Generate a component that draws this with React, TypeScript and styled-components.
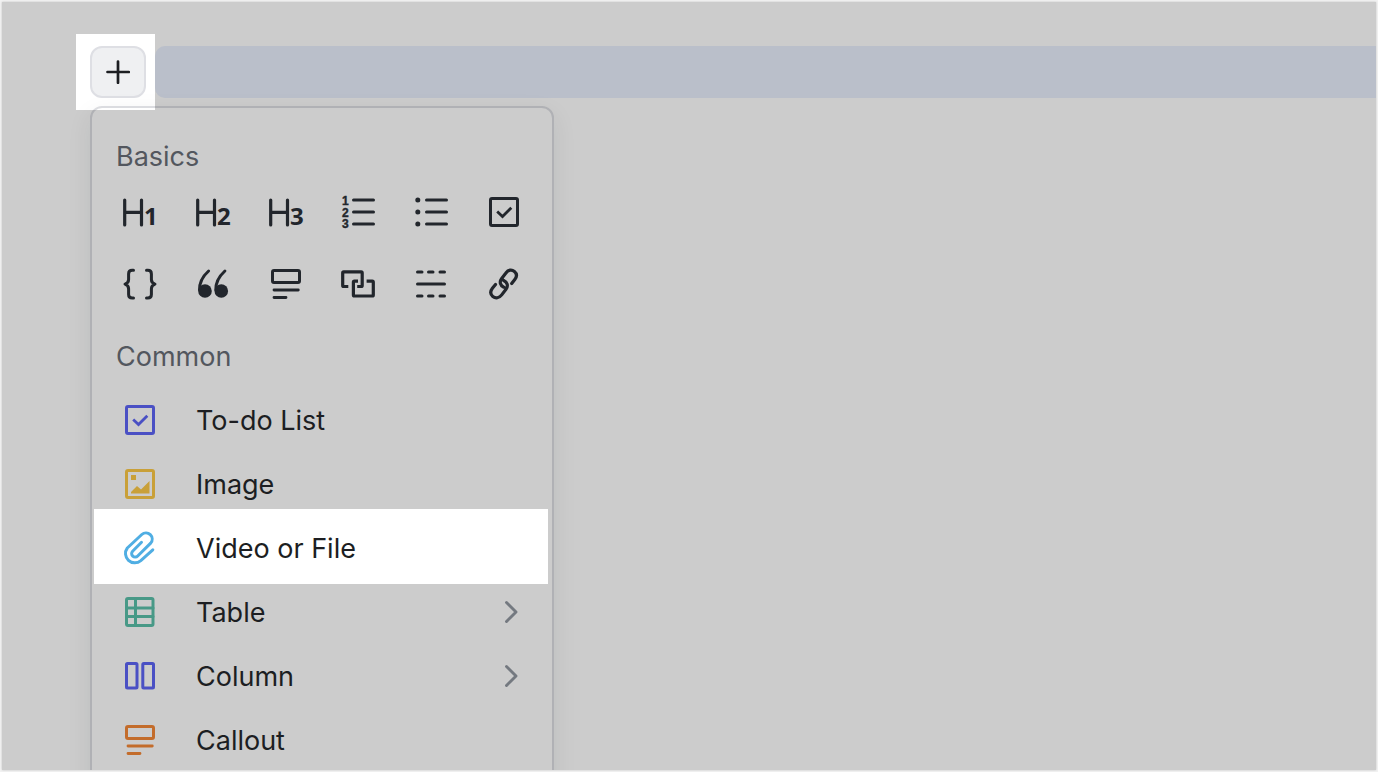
import React from "react";
import styled, { createGlobalStyle } from "styled-components";

const GlobalStyle = createGlobalStyle`
  * { box-sizing: border-box; }
  body { margin: 0; background: #f2f2f2; }
  button { font: inherit; color: inherit; border: 0; background: none; padding: 0; cursor: pointer; }
`;

const Page = styled.div`
  height: 100vh;
  padding: 2px;
  font-family: Inter, "Liberation Sans", sans-serif;
  color: #1c1e22;
`;

const Canvas = styled.main`
  height: 100%;
  overflow: hidden;
  padding: 32px 0 0 74px;
  background: #cccccc;
  box-shadow: 0 0 2px rgba(0, 0, 0, 0.2);
`;

const EditorLine = styled.div`
  display: flex;
  align-items: center;
`;

const Spotlight = styled.div`
  flex: none;
  padding: 12px 9px 12px 14px;
  background: #ffffff;
`;

const AddButton = styled.button`
  display: flex;
  align-items: center;
  justify-content: center;
  width: 56px;
  height: 52px;
  border: 2px solid #dedfe4;
  border-radius: 12px;
  background: #eff0f2;
`;

const SelectedBlock = styled.div`
  flex: 1;
  height: 52px;
  border-radius: 10px 0 0 10px;
  background: #babfca;
`;

const Menu = styled.div`
  position: relative;
  z-index: 0;
  width: 464px;
  margin: -4px 0 0 14px;
  padding: 32px 0;
  border: 2px solid rgba(31, 35, 60, 0.16);
  border-radius: 12px;
  box-shadow: 0 8px 24px rgba(31, 35, 41, 0.08);
`;

const GroupTitle = styled.h2`
  margin: 0 24px 14px;
  font-size: 27px;
  font-weight: 400;
  line-height: 34px;
  color: #53575e;
`;

const BasicGrid = styled.div`
  display: grid;
  grid-template-columns: repeat(6, 48px);
  grid-auto-rows: 48px;
  row-gap: 24px;
  justify-content: space-between;
  margin: 0 24px 32px;
  color: #22262c;
`;

const BasicButton = styled.button`
  display: flex;
  align-items: center;
  justify-content: center;
`;

const Item = styled.button<{ $lit?: boolean }>`
  position: relative;
  display: flex;
  align-items: center;
  gap: 32px;
  width: 100%;
  height: 64px;
  padding: 0 29px 0 24px;
  font-size: 27px;
  line-height: 32px;
  text-align: left;

  &::before {
    content: "";
    display: ${(p) => (p.$lit ? "block" : "none")};
    position: absolute;
    z-index: -1;
    inset: -7px 4px -4px 2px;
    background: #ffffff;
  }
`;

const ItemIcon = styled.span<{ $color: string }>`
  display: flex;
  justify-content: center;
  width: 48px;
  color: ${(p) => p.$color};
`;

const ItemLabel = styled.span`
  flex: 1;
  padding-top: 2px;
`;

const Glyph = styled.svg`
  display: block;
  flex: none;
  fill: none;
  stroke: currentColor;
  stroke-width: 3;
  stroke-linecap: round;
  stroke-linejoin: round;
`;

const LevelDigit = styled.text`
  font-family: "Open Sans", "Noto Sans", sans-serif;
  font-size: 24px;
  font-weight: 700;
  fill: currentColor;
  stroke: none;
`;

const ListDigit = styled.text`
  font-family: "Liberation Sans", sans-serif;
  font-size: 12px;
  font-weight: 700;
  fill: currentColor;
  stroke: currentColor;
  stroke-width: 0.4;
`;

const Icon = ({ children }: { children: React.ReactNode }) => (
  <Glyph width="40" height="40" viewBox="0 0 40 40" aria-hidden="true">
    {children}
  </Glyph>
);

const Heading = ({ level }: { level: number }) => (
  <Icon>
    <path d="M4.700 8v25M21.500 8v25M5 20.300h16.500" strokeWidth="3.200" />
    <LevelDigit x="24" y="33">{level}</LevelDigit>
  </Icon>
);

const NumberedList = () => (
  <Icon>
    <path d="M15.500 8h20M15.500 20h20M15.500 32h20" />
    <ListDigit x="4" y="12.500">1</ListDigit>
    <ListDigit x="4" y="24.500">2</ListDigit>
    <ListDigit x="4" y="36">3</ListDigit>
  </Icon>
);

const BulletList = () => (
  <Icon>
    <path d="M15.500 8h20M15.500 20h20M15.500 32h20" />
    <g fill="currentColor" stroke="none">
      <circle cx="6.800" cy="8" r="2.500" />
      <circle cx="6.800" cy="20" r="2.500" />
      <circle cx="6.800" cy="32" r="2.500" />
    </g>
  </Icon>
);

const CheckBox = () => (
  <Icon>
    <rect x="6.500" y="6.500" width="27" height="27" rx="1.500" />
    <path d="M13.200 19.500l5.300 5 8.800-8.800" strokeWidth="2.800" strokeLinecap="butt" strokeLinejoin="miter" />
  </Icon>
);

const Braces = () => (
  <Icon>
    <path
      d="M13.500 6.300h-1.300q-3.600 0-3.600 3.600v5.600q0 3.500-3.600 4.600q3.600 1.200 3.600 4.700v5.600q0 3.600 3.600 3.600h1.300M26.500 6.300h1.300q3.600 0 3.600 3.600v5.600q0 3.500 3.600 4.600q-3.600 1.200-3.600 4.700v5.600q0 3.600-3.600 3.600h-1.300"
      strokeWidth="3"
    />
  </Icon>
);

const Quote = () => (
  <Icon>
    <g fill="currentColor" stroke="none">
      <circle cx="12" cy="27" r="6.800" />
      <circle cx="28.300" cy="27" r="6.800" />
    </g>
    <path d="M6.500 26C6.300 18.500 9.500 12.500 15.600 7M22.800 26C22.600 18.500 25.800 12.500 31.900 7" strokeWidth="3" />
  </Icon>
);

const CalloutShape = () => (
  <Icon>
    <rect x="6.500" y="6.500" width="27" height="12" rx="1.500" />
    <path d="M8 26h24.300M8 33.500h12" strokeWidth="2.800" />
  </Icon>
);

const SyncedBlock = () => (
  <Icon>
    <path
      d="M10.300 22.500h-4.600a1 1 0 0 1-1-1v-12.600a1 1 0 0 1 1-1h17.500a1 1 0 0 1 1 1v12.600a1 1 0 0 1-1 1h-4M20 17.200h-3.600a1 1 0 0 0-1 1v12.800a1 1 0 0 0 1 1h17.900a1 1 0 0 0 1-1v-12.800a1 1 0 0 0-1-1h-5.700"
      strokeWidth="3.200"
      strokeLinecap="butt"
    />
  </Icon>
);

const Divider = () => (
  <Icon>
    <path d="M6.500 8h4.500M17.500 8h4.500M29 8h4.500M6.500 20h27M6.500 32h4.500M17.500 32h4.500M29 32h4.500" />
  </Icon>
);

const LinkShape = () => (
  <Icon>
    <path
      d="M20.300 23.200C16.700 21.600 15.700 17.700 18 14.700L22.400 9C24.800 5.700 28.300 5.300 30.900 7.500C33.400 9.600 33.500 12.600 31.300 15.400L28.200 19.500M20.200 16.500C23.900 18.200 25 22 22.500 25.200L18.200 30.900C15.700 34.200 12 34.600 9.300 32.400C6.700 30.200 6.700 27.200 8.900 24.300L12 20.500"
      strokeWidth="3.200"
      transform="translate(-0.500 0)"
    />
  </Icon>
);

const ImageShape = () => (
  <Icon>
    <rect x="6.500" y="6.500" width="27" height="27" rx="1.500" />
    <path d="M11 11h5v5h-5zM11 29.500v-1.500l6-6 4 3.500 8.500-8.500v12.500z" fill="currentColor" stroke="none" />
  </Icon>
);

const Clip = () => (
  <Icon>
    <path
      d="M32.800 21.800L20.800 32.600A9.300 9.300 0 0 1 7.300 20L21.800 6.500A6.200 6.200 0 0 1 30.700 15.100L17.700 28A3.500 3.500 0 0 1 12.600 23.200L21.500 14.300"
      strokeWidth="3"
    />
  </Icon>
);

const TableShape = () => (
  <Icon>
    <rect x="6.500" y="6.500" width="26.500" height="27" rx="1.500" />
    <path d="M15.500 7v26M7 16h26M7 24.500h26" />
  </Icon>
);

const ColumnShape = () => (
  <Icon>
    <rect x="6.500" y="7.500" width="10.500" height="24.500" rx="1" />
    <rect x="22.800" y="7.500" width="10.700" height="24.500" rx="1" />
  </Icon>
);

const Plus = () => (
  <Glyph width="24" height="24" viewBox="0 0 24 24" aria-hidden="true">
    <path d="M12 1.500v21.300M1.500 12h21.300" strokeWidth="2.700" />
  </Glyph>
);

const ChevronGlyph = styled(Glyph)`
  color: #747980;
`;

const basics: { name: string; icon: React.ReactNode }[] = [
  { name: "Heading 1", icon: <Heading level={1} /> },
  { name: "Heading 2", icon: <Heading level={2} /> },
  { name: "Heading 3", icon: <Heading level={3} /> },
  { name: "Ordered list", icon: <NumberedList /> },
  { name: "Bulleted list", icon: <BulletList /> },
  { name: "Checkbox", icon: <CheckBox /> },
  { name: "Code block", icon: <Braces /> },
  { name: "Quote", icon: <Quote /> },
  { name: "Callout", icon: <CalloutShape /> },
  { name: "Synced block", icon: <SyncedBlock /> },
  { name: "Divider", icon: <Divider /> },
  { name: "Link", icon: <LinkShape /> },
];

const common: { label: string; color: string; icon: React.ReactNode; lit?: boolean; more?: boolean }[] = [
  { label: "To-do List", color: "#4a50c4", icon: <CheckBox /> },
  { label: "Image", color: "#c9a038", icon: <ImageShape /> },
  { label: "Video or File", color: "#50aee3", icon: <Clip />, lit: true },
  { label: "Table", color: "#489987", icon: <TableShape />, more: true },
  { label: "Column", color: "#4a50c4", icon: <ColumnShape />, more: true },
  { label: "Callout", color: "#c36c2b", icon: <CalloutShape /> },
];

export default function App() {
  return (
    <Page>
      <GlobalStyle />
      <Canvas>
        <EditorLine>
          <Spotlight>
            <AddButton aria-label="Add block">
              <Plus />
            </AddButton>
          </Spotlight>
          <SelectedBlock />
        </EditorLine>
        <Menu>
          <GroupTitle>Basics</GroupTitle>
          <BasicGrid>
            {basics.map((b) => (
              <BasicButton key={b.name} aria-label={b.name}>
                {b.icon}
              </BasicButton>
            ))}
          </BasicGrid>
          <GroupTitle>Common</GroupTitle>
          {common.map((c) => (
            <Item key={c.label} $lit={c.lit}>
              <ItemIcon $color={c.color}>{c.icon}</ItemIcon>
              <ItemLabel>{c.label}</ItemLabel>
              {c.more && (
                <ChevronGlyph width="24" height="24" viewBox="0 0 24 24" aria-hidden="true">
                  <path d="M7.500 2.500l9.500 9.500-9.500 9.500" strokeWidth="2.900" />
                </ChevronGlyph>
              )}
            </Item>
          ))}
        </Menu>
      </Canvas>
    </Page>
  );
}
